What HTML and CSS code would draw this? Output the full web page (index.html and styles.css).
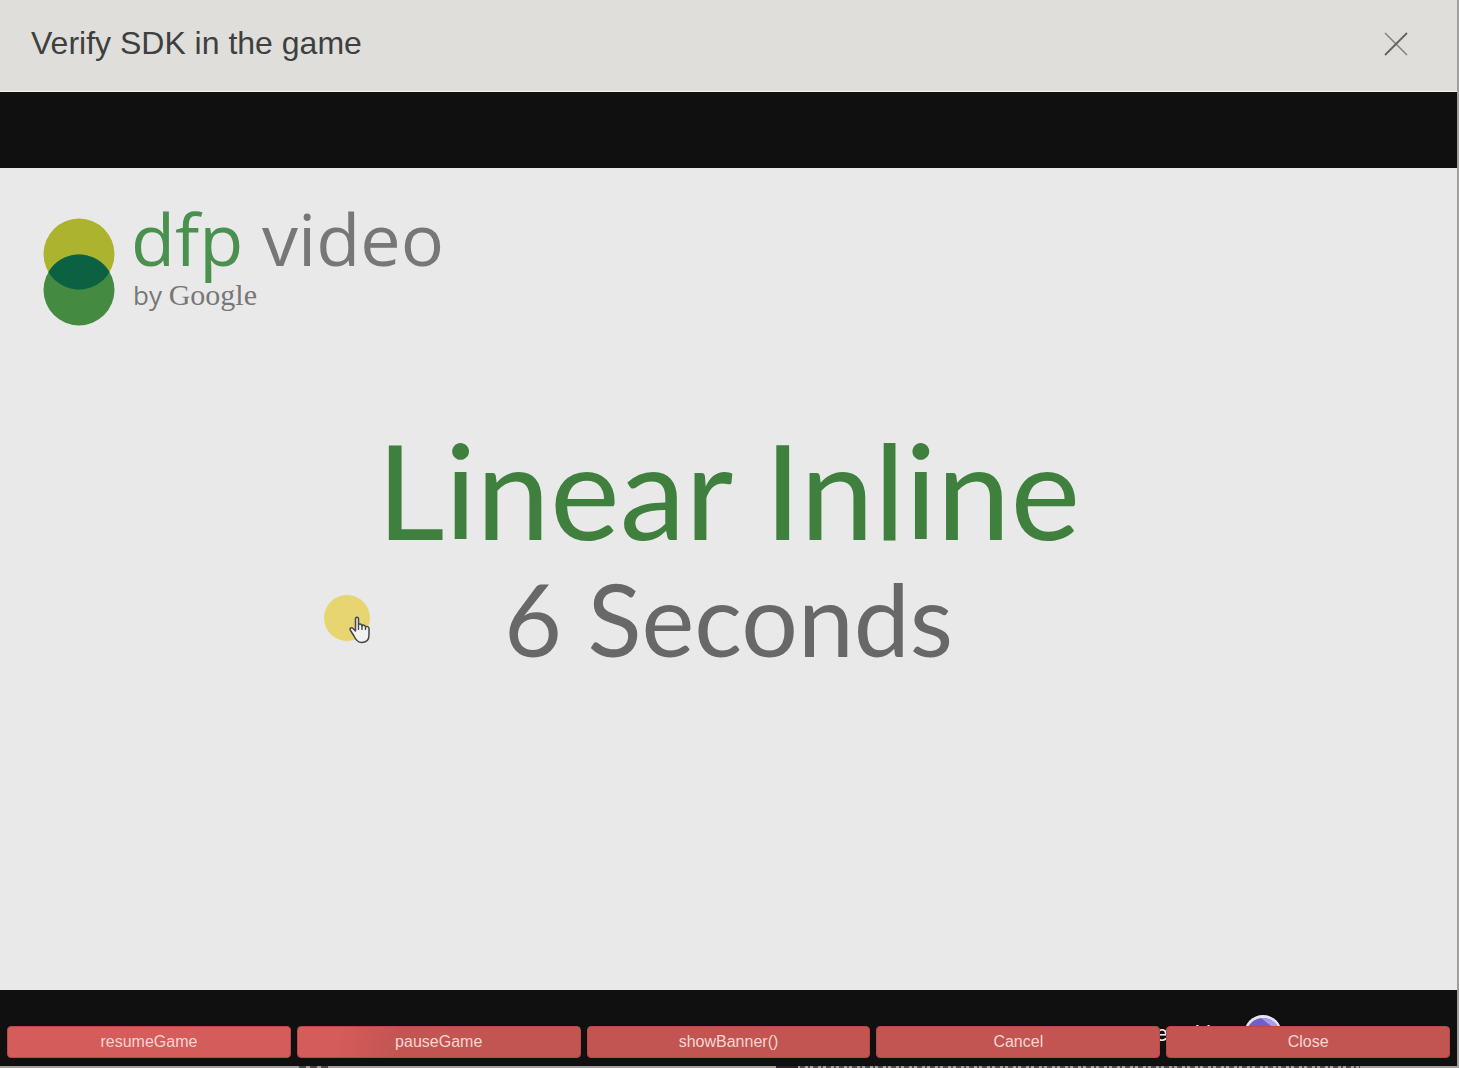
FILE: index.html
```html
<!DOCTYPE html>
<html lang="en">
<head>
<meta charset="utf-8">
<title>Verify SDK in the game</title>
<meta name="viewport" content="width=device-width, initial-scale=1">
<link rel="stylesheet" href="styles.css">
</head>
<body>
<section class="dialog" aria-labelledby="dialog-title">
  <header class="dialog-header">
    <h1 class="dialog-title" id="dialog-title">Verify SDK in the game</h1>
    <button class="dismiss" type="button" aria-label="Dismiss">
      <svg width="26" height="26" viewBox="0 0 26 26" aria-hidden="true"><path d="M2 2L24 24" stroke="#85837f" stroke-width="1.6"/><path d="M24 2L2 24" stroke="#62605c" stroke-width="1.8"/></svg>
    </button>
  </header>
  <main class="stage">
    <div class="ad">
      <div class="brand">
        <svg class="brand-mark" width="72" height="108" viewBox="0 0 72 108" aria-hidden="true">
          <circle cx="36" cy="36" r="35.500" fill="#acb32f"/>
          <circle cx="36" cy="72" r="35.500" fill="#448b41"/>
          <path d="M5.400 54A35.500 35.500 0 0 1 66.600 54A35.500 35.500 0 0 1 5.400 54Z" fill="#0b6142"/>
        </svg>
        <div class="brand-text">
          <div class="brand-name"><span class="brand-dfp">dfp</span> video</div>
          <div class="brand-by">by <span class="brand-google">Google</span></div>
        </div>
      </div>
      <div class="ad-title">Linear Inline</div>
      <div class="ad-length">6 Seconds</div>
      <svg class="pointer" width="50" height="52" viewBox="0 0 50 52" aria-hidden="true">
        <circle cx="24" cy="24" r="23" fill="#e7d571"/>
        <path d="M31 42L27.500 36.500C26 34.500 28 33 30 34.500L32.500 37V25C32.500 22.500 35.500 22.500 35.500 25V31C35.500 29.500 39 29.500 39 32C39.500 30.500 42.500 31 42.500 33C43.500 32 46 32.500 46 34.500V41C46 46 43 48.500 38.500 48.500C34.500 48.500 32.500 45.500 31 42Z" fill="#f2f2f2" stroke="#47474a" stroke-width="1.500" stroke-linejoin="round"/>
        <path d="M35.500 31V36M39 32V36M42.500 33V36" stroke="#47474a" stroke-width="1.300"/>
      </svg>
    </div>
    <div class="bottom">
      <div class="credit" aria-hidden="true">
        <span class="credit-by">Powered by</span>
        <svg class="credit-logo" width="40" height="40" viewBox="0 0 40 40"><circle cx="20" cy="20" r="19" fill="#e8e2f5"/><circle cx="20" cy="21" r="17" fill="#705fc8"/><path d="M18 4A17 17 0 0 1 36 16L28 12Z" fill="#a99be8"/></svg>
        <span class="credit-name">GameDistribution</span>
      </div>
      <div class="actions">
        <button type="button" class="action">resumeGame</button>
        <button type="button" class="action">pauseGame</button>
        <button type="button" class="action">showBanner()</button>
        <button type="button" class="action">Cancel</button>
        <button type="button" class="action">Close</button>
      </div>
    </div>
  </main>
</section>
</body>
</html>
```
FILE: styles.css
```css
* { box-sizing: border-box; }
body {
  margin: 0;
  background: #a09f9d;
  font-family: "Liberation Sans", Arial, sans-serif;
  overflow: hidden;
}
.dialog {
  display: flex;
  flex-direction: column;
  min-height: 100vh;
  padding: 0 2px 2px 0;
  background:
    linear-gradient(#2a2428, #2a2428) 54% 100% / 22px 2px no-repeat,
    repeating-linear-gradient(90deg, #4c4a4a 0 5px, #a09f9d 5px 8px, #4c4a4a 8px 10px, #a09f9d 10px 13px) 89% 100% / 560px 2px no-repeat,
    repeating-linear-gradient(90deg, #4a4848 0 7px, #a09f9d 7px 11px) 21% 100% / 33px 2px no-repeat;
}
.dialog-header {
  display: flex;
  align-items: center;
  justify-content: space-between;
  height: 92px;
  padding: 0 48px 4px 31px;
  background: #dfdeda;
  border-bottom: 1px solid #f4f3f0;
}
.dialog-title {
  margin: 0;
  font-size: 32px;
  line-height: 38px;
  padding-bottom: 2px;
  font-weight: 400;
  color: #3d3f41;
}
.dismiss {
  display: flex;
  padding: 0;
  border: 0;
  background: none;
}
.stage {
  display: flex;
  flex: 1;
  flex-direction: column;
  padding-top: 76px;
  background: #101010;
}
.ad {
  position: relative;
  flex: 1;
  padding: 28px 43px;
  background: #e9e9e9;
  text-align: center;
}
.brand {
  display: flex;
  gap: 16px;
  align-items: flex-end;
  height: 130px;
  text-align: left;
}
.brand-text { height: 130px; }
.brand-name {
  font-family: "Open Sans", sans-serif;
  font-size: 72px;
  line-height: 84px;
  color: #777;
}
.brand-dfp { color: #4a9150; }
.brand-by {
  padding-left: 2px;
  font-family: "Open Sans", sans-serif;
  font-size: 26px;
  line-height: 30px;
  color: #777;
}
.brand-google { font-family: "Liberation Serif", serif; font-size: 30px; }
.ad-title {
  margin-top: 92px;
  font-family: Lato, sans-serif;
  font-size: 132px;
  line-height: 142px;
  color: #3f803e;
}
.ad-length {
  font-family: Lato, sans-serif;
  font-size: 100px;
  line-height: 116px;
  color: #686868;
}
.pointer {
  position: absolute;
  left: 323px;
  top: 426px;
}
.bottom {
  position: relative;
  padding: 36px 7px 8px;
  overflow: hidden;
}
.credit {
  position: absolute;
  top: 24px;
  right: 24px;
  display: flex;
  line-height: 40px;
  white-space: nowrap;
}
.credit-by { width: 130px; font-size: 22px; color: #f0f0f0; }
.credit-logo { margin-right: 10px; }
.credit-name { width: 140px; font-size: 18px; color: #6b4a4a; }
.actions {
  position: relative;
  display: grid;
  grid-template-columns: repeat(5, 1fr);
  gap: 6px;
}
.action {
  height: 32px;
  padding: 0;
  border: 1px solid #b84946;
  border-radius: 4px;
  background: #c25552;
  color: #f6d5d3;
  font-family: inherit;
  font-size: 16px;
}
.action:first-child { background: #d45c5a; }
.action:nth-child(2) { background: linear-gradient(100deg, #d45c5a 15%, #c25552 35%); }
```
